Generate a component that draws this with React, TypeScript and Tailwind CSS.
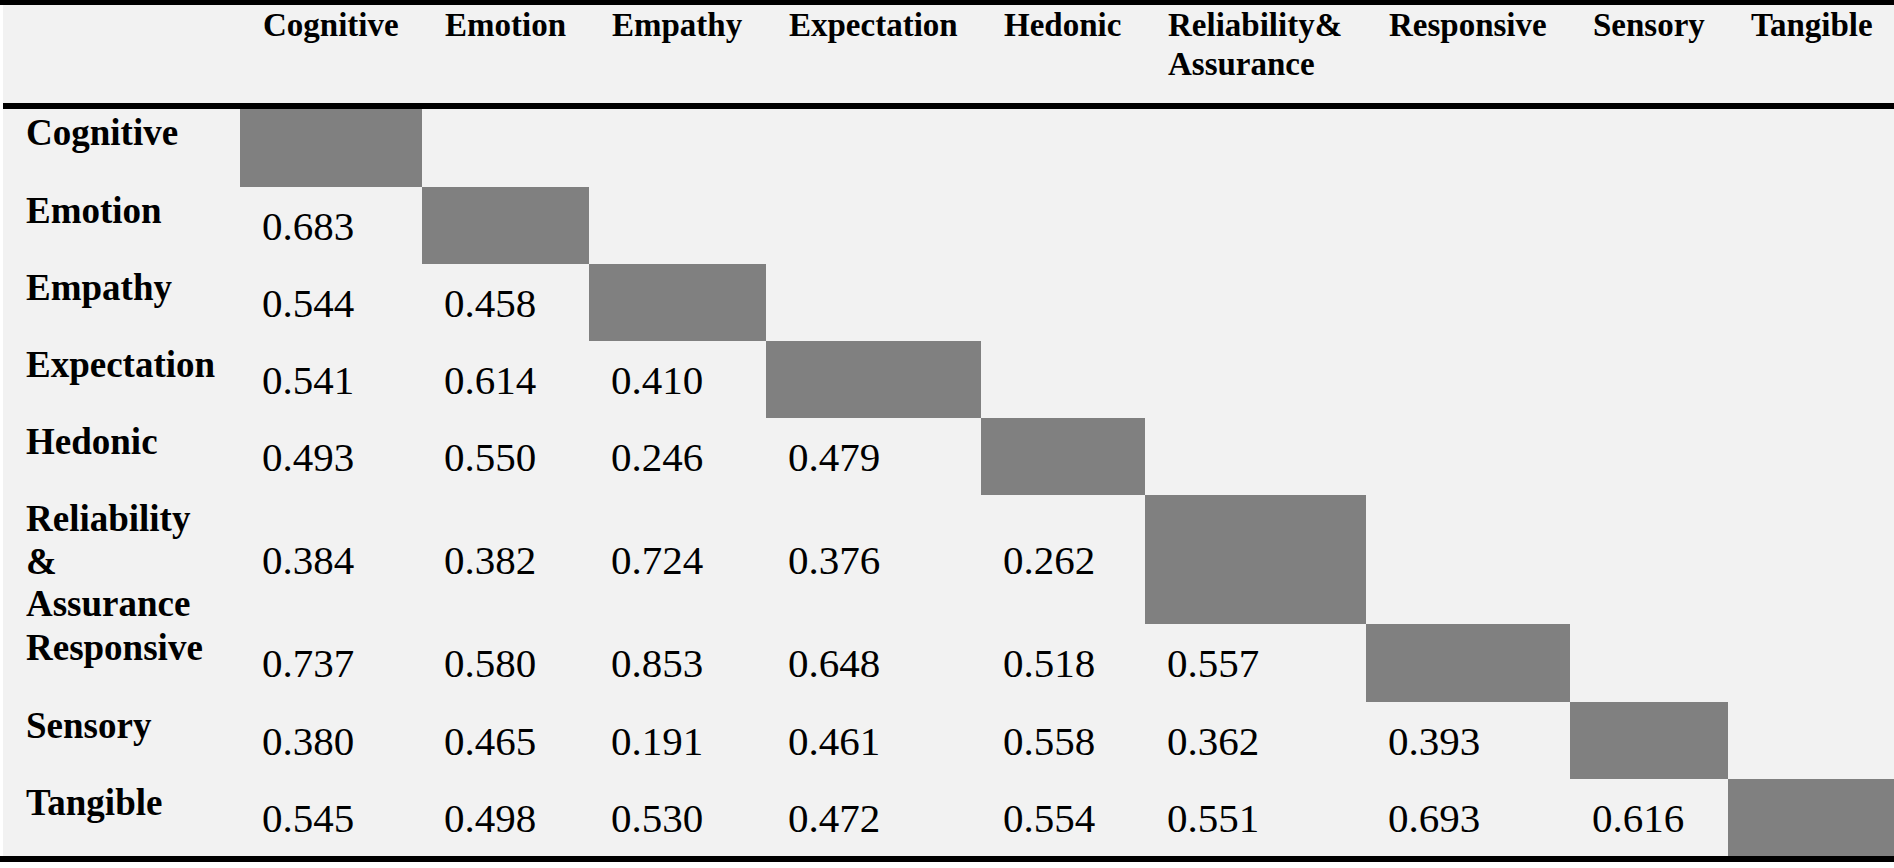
import React from 'react'

const headers = ['Cognitive', 'Emotion', 'Empathy', 'Expectation', 'Hedonic', 'Reliability& Assurance', 'Responsive', 'Sensory', 'Tangible']

const rows: { label: React.ReactNode; values: string[] }[] = [
  { label: 'Cognitive', values: [] },
  { label: 'Emotion', values: ['0.683'] },
  { label: 'Empathy', values: ['0.544', '0.458'] },
  { label: 'Expectation', values: ['0.541', '0.614', '0.410'] },
  { label: 'Hedonic', values: ['0.493', '0.550', '0.246', '0.479'] },
  {
    label: (
      <>
        Reliability
        <br />&amp;
        <br />Assurance
      </>
    ),
    values: ['0.384', '0.382', '0.724', '0.376', '0.262'],
  },
  { label: 'Responsive', values: ['0.737', '0.580', '0.853', '0.648', '0.518', '0.557'] },
  { label: 'Sensory', values: ['0.380', '0.465', '0.191', '0.461', '0.558', '0.362', '0.393'] },
  { label: 'Tangible', values: ['0.545', '0.498', '0.530', '0.472', '0.554', '0.551', '0.693', '0.616'] },
]

const cols = 'grid grid-cols-[237px_182px_167px_177px_215px_164px_221px_204px_158px_166px]'

function App() {
  return (
    <div
      className="w-[1894px] h-[868px] bg-white text-black overflow-hidden"
      style={{ fontFamily: '"Liberation Serif", "Times New Roman", serif' }}
    >
      <div className="border-t-[5px] border-b-[6px] border-black">
        {/* header row */}
        <div className={`${cols} ml-[3px] h-[104px] bg-[#f2f2f2] border-b-[6px] border-black`}>
          <div />
          {headers.map((h) => (
            <div key={h} className="pl-[23px] pr-[6px] pt-[1px] text-[33px] leading-[39px] font-bold">
              {h}
            </div>
          ))}
        </div>

        {/* body */}
        <div className={`${cols} ml-[3px] grid-rows-[78px_77px_77px_77px_77px_129px_78px_77px_77px] bg-[#f2f2f2]`}>
          {rows.map((r, i) => (
            <React.Fragment key={i}>
              <div className="pl-[23px] pt-[3px] text-[37px] leading-[42.5px] font-bold">{r.label}</div>
              {headers.map((_, j) => {
                if (j === i) return <div key={j} className="bg-[#808080]" />
                return (
                  <div key={j} className="flex items-center pl-[22px] pt-[1px] text-[41px] leading-none">
                    {r.values[j] ?? ''}
                  </div>
                )
              })}
            </React.Fragment>
          ))}
        </div>
      </div>
    </div>
  )
}

export default App
